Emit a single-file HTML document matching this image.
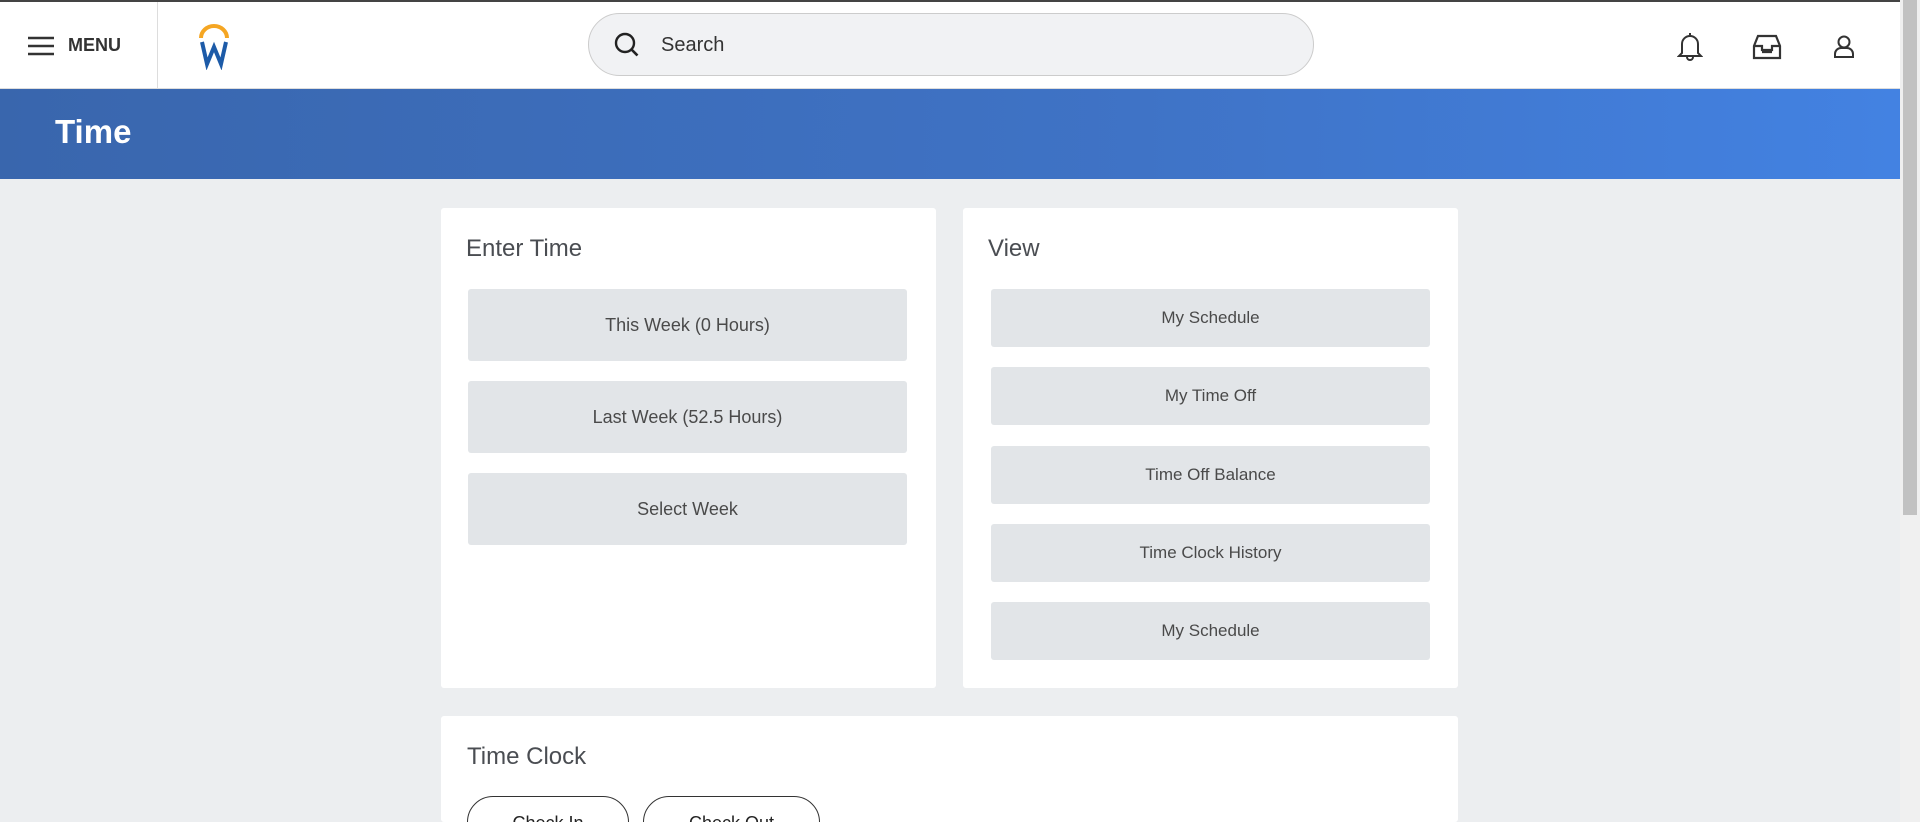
<!DOCTYPE html>
<html style="width:1920px;height:822px;overflow:hidden"><head><meta charset="utf-8"><style>
*{box-sizing:border-box;margin:0;padding:0}
body{width:1920px;height:822px;overflow:hidden;background:#eceef0;font-family:"Liberation Sans",Arial,sans-serif;position:relative}
.wrap{position:absolute;left:0;top:0;width:1920px;height:822px;overflow:hidden}
.top{position:absolute;left:0;top:0;width:1900px;height:89px;background:#fff;border-top:2px solid #444;border-bottom:1px solid #ddd}
.sb{position:absolute;left:1900px;top:0;width:20px;height:822px;background:#f0f0f0}
.sb div{position:absolute;left:3px;top:0;width:14px;height:515px;background:#c2c2c2}
.ban{position:absolute;left:0;top:89px;width:1900px;height:90px;background:linear-gradient(90deg,#3966ad,#3f73c6 60%,#4382e2)}
.ban h1{position:absolute;left:55px;top:24px;color:#fff;font-size:33px;font-weight:bold}
.card{position:absolute;background:#fff;border-radius:3px}
.card h2{position:absolute;left:25px;font-weight:normal;font-size:24px;color:#4a4d52}
.b{position:absolute;background:#e2e5e8;border-radius:3px;color:#4a4a4a;display:flex;align-items:center;justify-content:center}
.pill{position:absolute;border:1.5px solid #333;border-radius:26px;background:#fff;height:60px;font-size:18px;text-align:center;padding-top:16px;color:#222}
</style></head><body><div class="wrap">
<div class="top">
 <svg style="position:absolute;left:28px;top:34px" width="26" height="20"><path d="M0 2h26M0 10h26M0 18h26" stroke="#333" stroke-width="2.6"/></svg>
 <div style="position:absolute;left:68px;top:33px;font-size:18px;font-weight:bold;color:#333">MENU</div>
 <div style="position:absolute;left:157px;top:0;width:1px;height:87px;background:#ddd"></div>
 <svg style="position:absolute;left:194px;top:20px" width="40" height="48"><path d="M7 16A13 12 0 0 1 33 16" fill="none" stroke="#f5a623" stroke-width="4"/><path d="M8 20l5 22l7-17l7 17l5-22" fill="none" stroke="#1d5ba8" stroke-width="4" stroke-linejoin="miter"/></svg>
 <div style="position:absolute;left:588px;top:11px;width:726px;height:63px;border:1px solid #ccc;border-radius:32px;background:#f1f2f4"></div>
 <svg style="position:absolute;left:614px;top:30px" width="26" height="26"><circle cx="11" cy="11" r="9" fill="none" stroke="#222" stroke-width="2.4"/><path d="M17.5 17.5l6 6" stroke="#222" stroke-width="2.6"/></svg>
 <div style="position:absolute;left:661px;top:32px;font-size:20px;color:#333">Search</div>
 <svg style="position:absolute;left:1677px;top:29px" width="26" height="32"><path d="M13 2v2M5 22V13a8 8 0 0 1 16 0v9l3 3H2z M10 26a3 3 0 0 0 6 0" fill="none" stroke="#333" stroke-width="2"/></svg>
 <svg style="position:absolute;left:1752px;top:32px" width="30" height="26"><path d="M6 2h18l4 10v12H2V12z M2 12h8v4h10v-4h8 M10 18h10" fill="none" stroke="#333" stroke-width="2.2"/></svg>
 <svg style="position:absolute;left:1833px;top:33px" width="22" height="24"><circle cx="11" cy="7" r="5.5" fill="none" stroke="#333" stroke-width="2"/><path d="M2 22v-3a6 6 0 0 1 6-6h6a6 6 0 0 1 6 6v3z" fill="none" stroke="#333" stroke-width="2"/></svg>
</div>
<div class="ban"><h1>Time</h1></div>
<div class="sb"><div></div></div>
<div class="card" style="left:441px;top:208px;width:495px;height:480px">
 <h2 style="top:27px">Enter Time</h2>
</div>
<div class="b" style="left:468px;top:289px;width:439px;height:72px;font-size:18px">This Week (0 Hours)</div>
<div class="b" style="left:468px;top:381px;width:439px;height:72px;font-size:18px">Last Week (52.5 Hours)</div>
<div class="b" style="left:468px;top:473px;width:439px;height:72px;font-size:18px">Select Week</div>
<div class="card" style="left:963px;top:208px;width:495px;height:480px">
 <h2 style="top:27px;left:25px">View</h2>
</div>
<div class="b" style="left:991px;top:289px;width:439px;height:58px;font-size:17px">My Schedule</div>
<div class="b" style="left:991px;top:367px;width:439px;height:58px;font-size:17px">My Time Off</div>
<div class="b" style="left:991px;top:446px;width:439px;height:58px;font-size:17px">Time Off Balance</div>
<div class="b" style="left:991px;top:524px;width:439px;height:58px;font-size:17px">Time Clock History</div>
<div class="b" style="left:991px;top:602px;width:439px;height:58px;font-size:17px">My Schedule</div>
<div class="card" style="left:441px;top:716px;width:1017px;height:106px">
 <h2 style="top:27px;left:26px">Time Clock</h2>
</div>
<div class="pill" style="left:467px;top:796px;width:162px">Check In</div>
<div class="pill" style="left:643px;top:796px;width:177px">Check Out</div>
</div></body></html>
